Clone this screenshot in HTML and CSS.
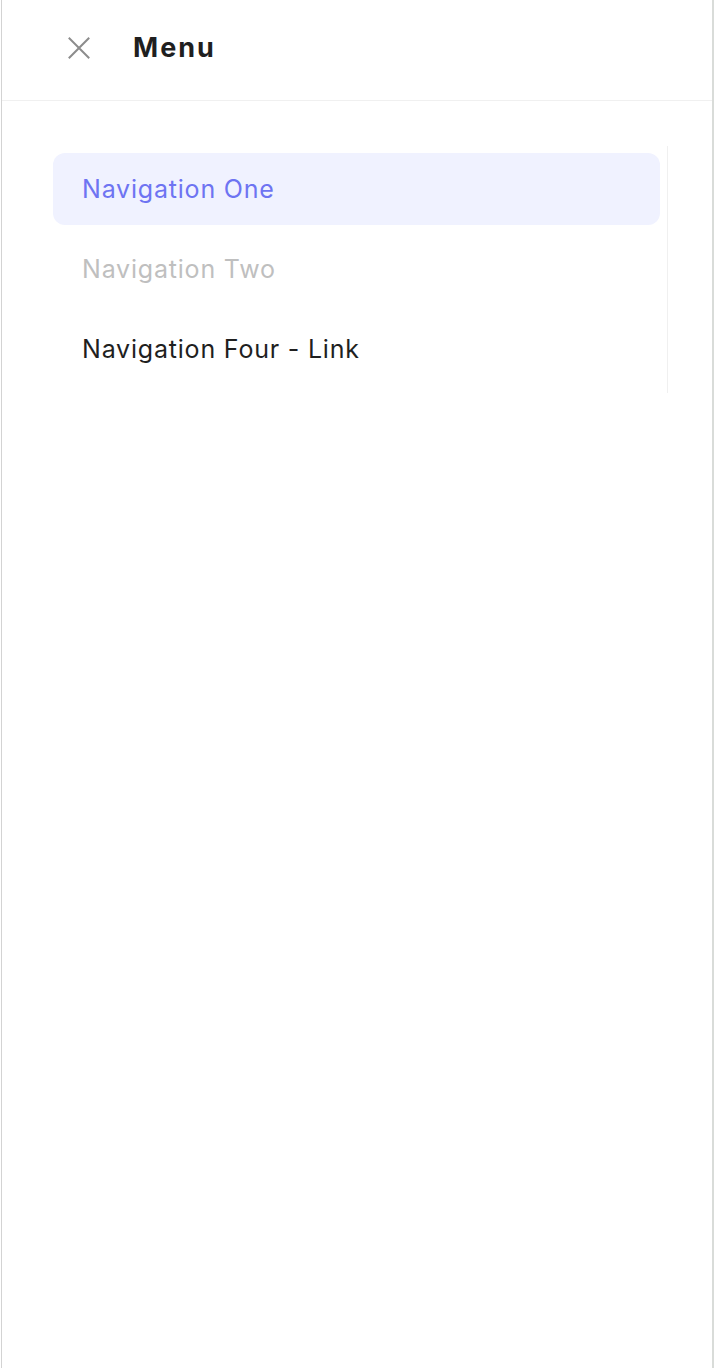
FILE: index.html
```html
<!DOCTYPE html>
<html lang="en">
<head>
<meta charset="utf-8">
<title>Menu</title>
<link rel="stylesheet" href="styles.css">
</head>
<body>
<div class="drawer">
  <header class="header">
    <button class="close" aria-label="Close">
      <svg width="22" height="22" viewBox="0 0 22 22" fill="none" stroke="#8c8c8c" stroke-width="2" stroke-linecap="square">
        <path d="M1.5 1.5 L20.5 20.5 M20.5 1.5 L1.5 20.5"/>
      </svg>
    </button>
    <h1 class="title">Menu</h1>
  </header>
  <main class="body">
    <ul class="menu">
      <li class="item active">Navigation One</li>
      <li class="item disabled">Navigation Two</li>
      <li class="item">Navigation Four - Link</li>
    </ul>
  </main>
</div>
</body>
</html>
```
FILE: styles.css
```css
html, body {
  margin: 0;
  padding: 0;
  background: #ffffff;
}
body {
  font-family: "Inter", "Noto Sans", "DejaVu Sans", sans-serif;
}
.drawer {
  box-sizing: border-box;
  margin-left: 1px;
  width: 713px;
  height: 1368px;
  border-left: 1px solid #d3d3d3;
  border-right: 2px solid #d9dcd9;
  display: flex;
  flex-direction: column;
  background: #fff;
}
.header {
  box-sizing: border-box;
  height: 101px;
  border-bottom: 1px solid #f0f0f0;
  display: flex;
  align-items: center;
  padding-left: 66px;
  padding-bottom: 5px;
  flex-shrink: 0;
}
.close {
  border: 0;
  background: none;
  padding: 0;
  margin: 0;
  width: 22px;
  height: 22px;
  display: flex;
  cursor: pointer;
}
.title {
  margin: 0 0 0 43px;
  font-size: 27px;
  font-weight: 700;
  color: #1f1f1f;
  letter-spacing: 2px;
}
.body {
  padding: 45px 44px 0 47px;
}
.menu {
  list-style: none;
  margin: 0;
  padding: 7px 0 8px 0;
  border-right: 1px solid #f0f0f0;
  display: flex;
  flex-direction: column;
  gap: 8px;
}
.item {
  height: 72px;
  margin: 0 7px 0 4px;
  padding-left: 29px;
  border-radius: 12px;
  display: flex;
  align-items: center;
  font-size: 25px;
  color: #1f1f1f;
  letter-spacing: 0.8px;
}
.item.active {
  background: #f0f2ff;
  color: #6e74f2;
}
.item.disabled {
  color: #bfbfbf;
}
```
